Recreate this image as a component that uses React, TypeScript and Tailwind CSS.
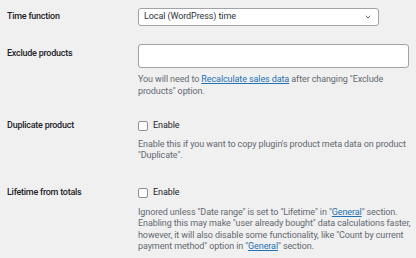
import { ChevronDown } from 'lucide-react';

const font = { fontFamily: 'Roboto, "Noto Sans", sans-serif' };

function Checkbox() {
  return <span className="inline-block h-[10px] w-[10px] shrink-0 rounded-[2px] border border-[#8c8f94] bg-white" />;
}

function Link({ children }: { children: React.ReactNode }) {
  return <a className="text-[#2271b1] underline underline-offset-1">{children}</a>;
}

function Label({ children, className = '' }: { children: React.ReactNode; className?: string }) {
  return (
    <div className={`w-[138px] shrink-0 pl-[7px] font-medium tracking-[-0.25px] ${className}`}>{children}</div>
  );
}

export default function App() {
  return (
    <div
      className="h-[258px] w-[416px] overflow-hidden bg-[#f0f0f1] text-[9px] leading-[11.6px] tracking-[-0.1px] text-[#1d2327]"
      style={font}
    >
      <div className="flex pt-[8px]">
        <Label className="pt-[3px]">Time function</Label>
        <div className="flex h-[18px] w-[241px] items-center justify-between rounded-[3px] border border-[#a0a3a8] bg-white pl-[5px] pr-[6px] text-[#2c3338]">
          <span>Local (WordPress) time</span>
          <ChevronDown className="h-[8px] w-[8px] text-[#50575e]" strokeWidth={2.5} />
        </div>
      </div>

      <div className="mt-[18px] flex">
        <Label className="pt-[4px]">Exclude products</Label>
        <div className="w-[271px]">
          <div className="h-[24px] rounded-[3px] border border-[#a0a3a8] bg-white" />
          <p className="mt-[6px] whitespace-nowrap text-[#646970]">
            You will need to <Link>Recalculate sales data</Link> after changing "Exclude
            <br />
            products" option.
          </p>
        </div>
      </div>

      <div className="mt-[23px] flex">
        <Label>Duplicate product</Label>
        <div className="w-[271px]">
          <label className="flex items-center gap-[5px]">
            <Checkbox />
            <span>Enable</span>
          </label>
          <p className="mt-[7px] whitespace-nowrap text-[#646970]">
            Enable this if you want to copy plugin's product meta data on product
            <br />
            "Duplicate".
          </p>
        </div>
      </div>

      <div className="mt-[25px] flex">
        <Label>Lifetime from totals</Label>
        <div className="w-[271px]">
          <label className="flex items-center gap-[5px]">
            <Checkbox />
            <span>Enable</span>
          </label>
          <p className="mt-[8px] whitespace-nowrap text-[#646970]">
            Ignored unless "Date range" is set to "Lifetime" in "<Link>General</Link>" section.
            <br />
            Enabling this may make "user already bought" data calculations faster,
            <br />
            however, it will also disable some functionality, like "Count by current
            <br />
            payment method" option in "<Link>General</Link>" section.
          </p>
        </div>
      </div>
    </div>
  );
}
